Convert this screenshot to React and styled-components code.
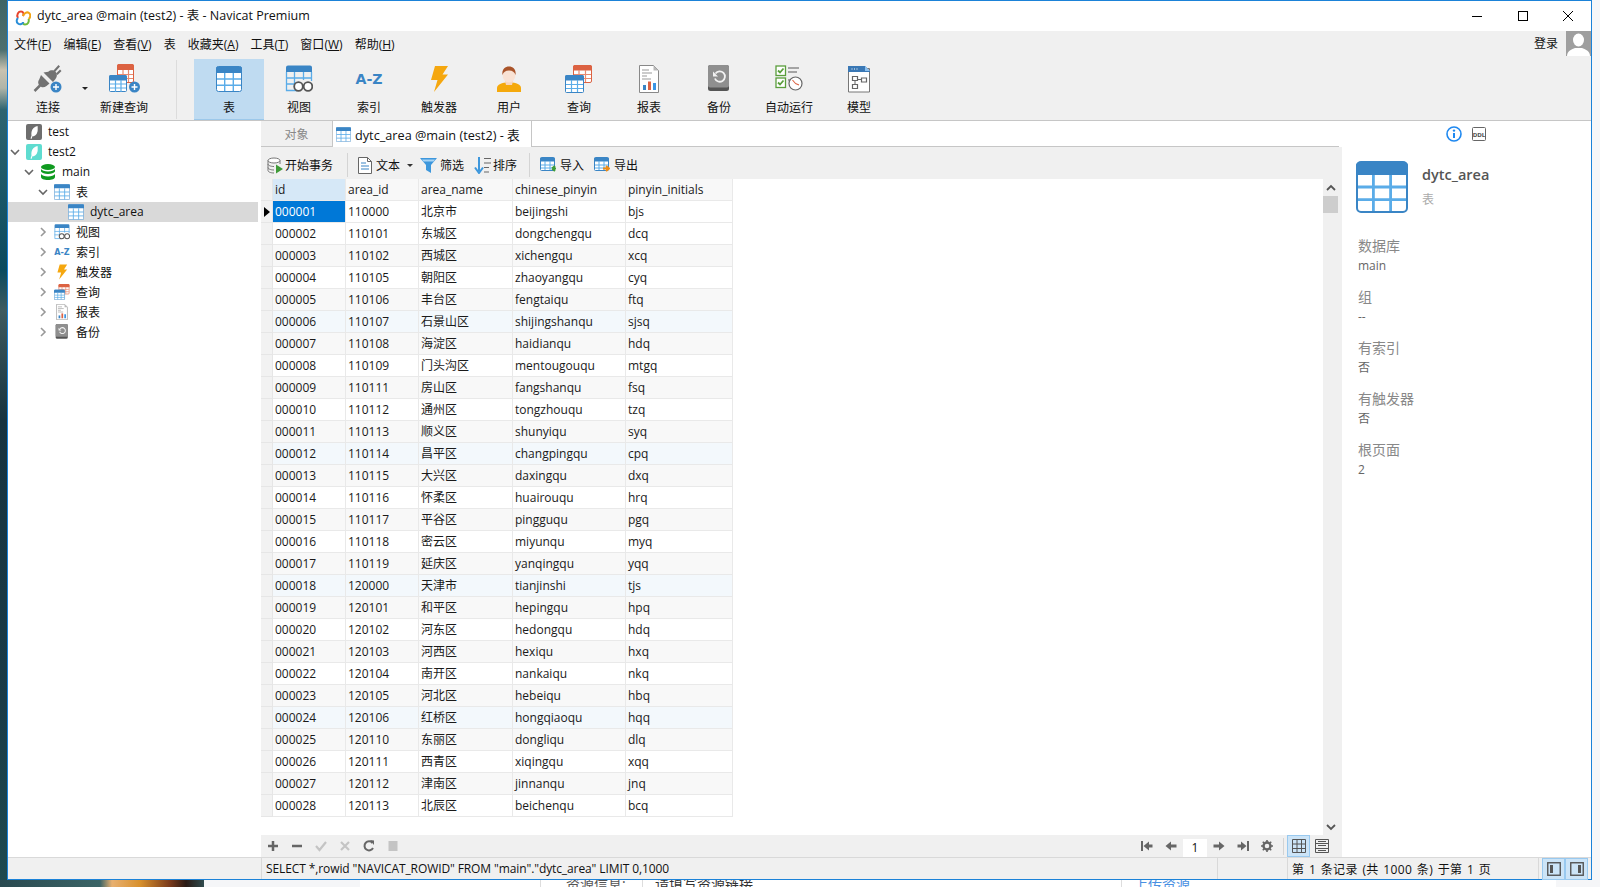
import React from "react";
import styled, { createGlobalStyle } from "styled-components";

const GlobalStyle = createGlobalStyle`
  html, body {
    margin: 0;
    padding: 0;
    height: 100%;
    overflow: hidden;
    background: #f5f6f8;
  }
  body {
    font-family: "Open Sans", "Noto Sans CJK SC", sans-serif;
    font-size: 12px;
    color: #111;
  }
`;

const rows = [
  ["000001", "110000", "北京市", "beijingshi", "bjs"],
  ["000002", "110101", "东城区", "dongchengqu", "dcq"],
  ["000003", "110102", "西城区", "xichengqu", "xcq"],
  ["000004", "110105", "朝阳区", "zhaoyangqu", "cyq"],
  ["000005", "110106", "丰台区", "fengtaiqu", "ftq"],
  ["000006", "110107", "石景山区", "shijingshanqu", "sjsq"],
  ["000007", "110108", "海淀区", "haidianqu", "hdq"],
  ["000008", "110109", "门头沟区", "mentougouqu", "mtgq"],
  ["000009", "110111", "房山区", "fangshanqu", "fsq"],
  ["000010", "110112", "通州区", "tongzhouqu", "tzq"],
  ["000011", "110113", "顺义区", "shunyiqu", "syq"],
  ["000012", "110114", "昌平区", "changpingqu", "cpq"],
  ["000013", "110115", "大兴区", "daxingqu", "dxq"],
  ["000014", "110116", "怀柔区", "huairouqu", "hrq"],
  ["000015", "110117", "平谷区", "pingguqu", "pgq"],
  ["000016", "110118", "密云区", "miyunqu", "myq"],
  ["000017", "110119", "延庆区", "yanqingqu", "yqq"],
  ["000018", "120000", "天津市", "tianjinshi", "tjs"],
  ["000019", "120101", "和平区", "hepingqu", "hpq"],
  ["000020", "120102", "河东区", "hedongqu", "hdq"],
  ["000021", "120103", "河西区", "hexiqu", "hxq"],
  ["000022", "120104", "南开区", "nankaiqu", "nkq"],
  ["000023", "120105", "河北区", "hebeiqu", "hbq"],
  ["000024", "120106", "红桥区", "hongqiaoqu", "hqq"],
  ["000025", "120110", "东丽区", "dongliqu", "dlq"],
  ["000026", "120111", "西青区", "xiqingqu", "xqq"],
  ["000027", "120112", "津南区", "jinnanqu", "jnq"],
  ["000028", "120113", "北辰区", "beichenqu", "bcq"],
];

const columns = ["id", "area_id", "area_name", "chinese_pinyin", "pinyin_initials"];

const menus = [
  ["文件", "F"],
  ["编辑", "E"],
  ["查看", "V"],
  ["表"],
  ["收藏夹", "A"],
  ["工具", "T"],
  ["窗口", "W"],
  ["帮助", "H"],
];

const details = [
  ["数据库", "main"],
  ["组", "--"],
  ["有索引", "否"],
  ["有触发器", "否"],
  ["根页面", "2"],
];

/* ---------- icons ---------- */

const TableIcon = ({ size = 26, dark = "#3a85c5", line = "#5aace8" }) => (
  <svg width={size} height={size} viewBox="0 0 26 26">
    <rect x="0.5" y="0.5" width="25" height="25" rx="2" fill="#fff" stroke={dark} />
    <path d="M0 2.5a2 2 0 0 1 2-2h22a2 2 0 0 1 2 2V7H0z" fill={dark} />
    <path d="M1 13h24M1 19.3h24M8.7 7v18M17.3 7v18" stroke={line} strokeWidth="1.4" />
  </svg>
);

const ViewIcon = ({ size = 28 }) => (
  <svg width={size} height={size} viewBox="0 0 28 28">
    <path d="M1 2.5a2 2 0 0 1 2-2h22a2 2 0 0 1 2 2V7H1z" fill="#3a85c5" />
    <path d="M1.5 7v18.5h11M26.5 7v9M1 13h26M1 19h10M9.5 7v12M18.5 7v8" stroke="#5aace8" strokeWidth="1.3" fill="none" />
    <circle cx="13.5" cy="21.5" r="4.3" fill="#fff" stroke="#555" strokeWidth="1.8" />
    <circle cx="23" cy="21.5" r="4.3" fill="#fff" stroke="#555" strokeWidth="1.8" />
    <path d="M17.8 21h1" stroke="#555" strokeWidth="1.8" />
  </svg>
);

const AzIcon = ({ size = 28 }) => (
  <svg width={size} height={size} viewBox="0 0 28 28">
    <text
      x="14"
      y="19"
      textAnchor="middle"
      textLength="27"
      lengthAdjust="spacingAndGlyphs"
      fontFamily="'DejaVu Sans', sans-serif"
      fontWeight="700"
      fontSize="14"
      fill="#3a85c5"
    >
      A-Z
    </text>
  </svg>
);

const BoltIcon = ({ size = 28 }) => (
  <svg width={size} height={size} viewBox="0 0 28 28">
    <path d="M10 1h13l-5.5 8.5H23L9 27l3.5-12H6z" fill="#f5a70f" />
  </svg>
);

const UserIcon = ({ size = 28 }) => (
  <svg width={size} height={size} viewBox="0 0 28 28">
    <path d="M2 27v-4c0-3.5 4.5-5.5 12-5.5s12 2 12 5.5v4z" fill="#f5a90c" />
    <path d="M10 16h8l-1 4h-6z" fill="#f7d5bd" />
    <ellipse cx="14" cy="9.5" rx="6.5" ry="8" fill="#f9e2d4" />
    <path d="M7.5 10C6.7 4.5 9.8 1.5 14 1.5S21.3 4.5 20.5 10c-1-3-2.8-4.5-6.5-4.5S8.5 7 7.5 10z" fill="#a9542a" />
  </svg>
);

const QueryIcon = ({ size = 28 }) => (
  <svg width={size} height={size} viewBox="0 0 28 28">
    <rect x="8.5" y="0.5" width="18" height="17" rx="1.5" fill="#fff" stroke="#dc6242" />
    <path d="M8 2a2 2 0 0 1 2-2h15a2 2 0 0 1 2 2v3.5H8z" fill="#dc6242" />
    <path d="M9 9.5h17M9 13.5h17M14 5v12M20.5 5v12" stroke="#e98a70" strokeWidth="1.2" />
    <rect x="0.5" y="10.5" width="18" height="17" rx="1" fill="#fff" stroke="#3a85c5" />
    <path d="M0 12a2 2 0 0 1 2-2h15a2 2 0 0 1 2 2v3.5H0z" fill="#3a85c5" />
    <path d="M1 19.5h17M1 23.5h17M6.5 15v12M12.5 15v12" stroke="#5aace8" strokeWidth="1.2" />
  </svg>
);

const NewQueryIcon = () => (
  <svg width="31" height="29" viewBox="0 0 31 29">
    <rect x="8.5" y="0.5" width="16" height="18" rx="1.5" fill="#fff" stroke="#dc6242" />
    <path d="M8 2a2 2 0 0 1 2-2h13a2 2 0 0 1 2 2v4H8z" fill="#dc6242" />
    <path d="M9 10.5h15M9 14.5h15M14 6v12M19.5 6v12" stroke="#e98a70" strokeWidth="1.2" />
    <rect x="0.5" y="11.5" width="17" height="16" rx="1" fill="#fff" stroke="#3a85c5" />
    <path d="M0 13a2 2 0 0 1 2-2h14a2 2 0 0 1 2 2v3.5H0z" fill="#3a85c5" />
    <path d="M1 20h16M1 24h16M6.5 16v12M12 16v12" stroke="#5aace8" strokeWidth="1.2" />
    <circle cx="25.5" cy="23" r="5.5" fill="#3a85c5" />
    <path d="M25.5 20v6M22.5 23h6" stroke="#fff" strokeWidth="1.4" />
  </svg>
);

const ConnectIcon = () => (
  <svg width="30" height="29" viewBox="0 0 30 29">
    <g fill="#727272">
      <path d="M8 11l8.5 8.5-3 2.5c-2.5 2-5.5 1.5-7-.2s-2-4.300-.2-6.500z" />
      <path d="M7 21.5l-5.5 5.5" stroke="#727272" strokeWidth="2.5" />
      <path d="M10.5 8.5l9.500 9.500 2.500-3c2-2.500 1.800-5.500 0-7.300s-5-2-7.200 0z" />
      <path d="M20.5 6.500l5-5.500 1.500 1.500-5 5.500zM23 9.500l4-4 1.500 1.500-4 4z" />
    </g>
    <circle cx="23" cy="23" r="5.5" fill="#3a85c5" />
    <path d="M23 20v6M20 23h6" stroke="#fff" strokeWidth="1.4" />
  </svg>
);

const ReportIcon = ({ size = 28 }) => (
  <svg width={size} height={size} viewBox="0 0 28 28">
    <path d="M4.5.5h14l5 5v22h-19z" fill="#fff" stroke="#888" />
    <path d="M18.5.5v5h5z" fill="#b9b9b9" />
    <path d="M7 5h7M7 8h10M7 11h5M7 14h9" stroke="#999" strokeWidth="1.1" />
    <path d="M8 20h3v5H8z" fill="#3a85c5" />
    <path d="M13 16.5h3V25h-3z" fill="#dc6242" />
    <path d="M18 18h3v7h-3z" fill="#3a95e5" />
  </svg>
);

const BackupIcon = ({ size = 28 }) => (
  <svg width={size} height={size} viewBox="0 0 28 28">
    <rect x="3" y="0" width="21" height="26" rx="2.5" fill="#555" />
    <rect x="3" y="0" width="21" height="22.5" rx="2" fill="#8f8f8f" />
    <path d="M10.5 8.5a5.2 5.2 0 1 1-.6 5" fill="none" stroke="#f2f2f2" strokeWidth="1.8" />
    <path d="M8 6.5v5h5z" fill="#f2f2f2" />
  </svg>
);

const AutoRunIcon = () => (
  <svg width="29" height="27" viewBox="0 0 29 27">
    <rect x="1" y="1" width="9.5" height="9.5" fill="#fff" stroke="#5a9e3c" strokeWidth="1.3" />
    <path d="M3 5.5l2 2 3.5-4" fill="none" stroke="#5a9e3c" strokeWidth="1.8" />
    <rect x="1" y="13" width="9.5" height="9.5" fill="#fff" stroke="#5a9e3c" strokeWidth="1.3" />
    <path d="M3 17.5l2 2 3.5-4" fill="none" stroke="#5a9e3c" strokeWidth="1.8" />
    <path d="M13 3h11M13 7h9M13 15h3" stroke="#8a8a8a" strokeWidth="1.6" />
    <circle cx="20.5" cy="18.5" r="6.5" fill="#fff" stroke="#666" strokeWidth="1.2" />
    <path d="M20.5 18.5l-3-3.5M20.5 18.5l3.5 1.5" stroke="#dc6242" strokeWidth="1.1" />
  </svg>
);

const ModelIcon = () => (
  <svg width="28" height="28" viewBox="0 0 28 28">
    <path d="M3.5 3.5h21V27h-21z" fill="#fff" stroke="#777" />
    <path d="M3 1h17l5 5v1H3z" fill="#3a78b5" />
    <path d="M20 1l5 5h-5z" fill="#8cc0ee" />
    <path d="M6.5 4h1M9 4h1M11.5 4h1" stroke="#fff" strokeWidth="1.2" />
    <path d="M7.5 11.5h5v4h-5zM16.5 13h5v4h-5zM7.5 19.5h5v4h-5z" fill="none" stroke="#666" strokeWidth="1.2" />
    <path d="M12.5 14.5h4M10 15.5v4" stroke="#666" />
  </svg>
);

const Feather = ({ color }) => (
  <svg width="16" height="16" viewBox="0 0 16 16">
    <rect width="16" height="16" rx="2" fill={color} />
    <path d="M11.5 2c-3 .5-5.500 3-6 6-.2 1.500-.2 2.500 0 3.500L4.500 14.500l1.200.2.700-2.500c3 .2 5-2.500 5.300-6 .1-1.800 0-3.500-.2-4.700z" fill="#fff" />
  </svg>
);

const DbIcon = () => (
  <svg width="14" height="16" viewBox="0 0 14 16">
    <ellipse cx="7" cy="3" rx="7" ry="3" fill="#0f9a1f" />
    <path d="M0 5c1 1.700 3.500 2.400 7 2.400S13 6.700 14 5v2.500c-1 1.700-3.500 2.400-7 2.400S1 9.200 0 7.500z" fill="#0f9a1f" />
    <path d="M0 10c1 1.700 3.500 2.400 7 2.400s6-.7 7-2.400v3c0 1.700-3 3-7 3s-7-1.300-7-3z" fill="#0f9a1f" />
  </svg>
);

const Chevron = ({ open, color = "#666" }) => (
  <svg width="10" height="10" viewBox="0 0 10 10">
    <path
      d={open ? "M1 3l4 4 4-4" : "M3 1l4 4-4 4"}
      fill="none"
      stroke={color}
      strokeWidth="1.6"
    />
  </svg>
);

const Logo = () => (
  <svg width="16" height="16" viewBox="0 0 16 16" fill="none" strokeWidth="2">
    <path d="M3 8C1 4.500 3.500 1.500 6 1.500S9 4 8 6" stroke="#e8452c" />
    <path d="M8 6c1-3 4-4.500 6-3s1.500 5-.5 6" stroke="#f2a516" />
    <path d="M13.5 9c1 2.500-.5 5.500-3.500 5.500-1.500 0-2-1-2-2.500" stroke="#6fbb3a" />
    <path d="M8 12c0 2-3 3-5 1.500S1.500 9.500 3 8" stroke="#2b8fd8" />
  </svg>
);

const StartTxIcon = () => (
  <svg width="17" height="17" viewBox="0 0 17 17">
    <ellipse cx="7" cy="3.5" rx="6" ry="2.5" fill="#fff" stroke="#777" />
    <path d="M1 3.5v10c0 1.400 2.700 2.500 6 2.500M13 3.500V7M1 7c0 1.400 2.700 2.500 6 2.500M1 10.500c0 1.400 2.700 2.500 6 2.500" fill="none" stroke="#777" />
    <path d="M9 7.5l7 4.500-7 4.500z" fill="#3f9b38" />
  </svg>
);

const DocIcon = () => (
  <svg width="14" height="17" viewBox="0 0 14 17">
    <path d="M.5.5h9l4 4v12H.5z" fill="#fff" stroke="#666" />
    <path d="M9.5.5v4h4" fill="none" stroke="#666" />
    <path d="M3 6h5M3 9h8M3 12h8" stroke="#3a85c5" />
  </svg>
);

const FunnelIcon = () => (
  <svg width="17" height="17" viewBox="0 0 17 17">
    <path d="M0 1h17l-6 7v8l-5-3V8z" fill="#3d97dc" />
    <path d="M2 2.5h13l-1.500 2h-10z" fill="#a7d4f5" />
  </svg>
);

const SortIcon = () => (
  <svg width="17" height="17" viewBox="0 0 17 17">
    <path d="M5 0v14M1 10.500L5 16l4-5.500" fill="none" stroke="#3d97dc" strokeWidth="2" />
    <path d="M10 1.5h7M10 6h7M10 10.500h5M10 15h5" stroke="#666" />
  </svg>
);

const TransferIcon = ({ arrow, color }) => (
  <svg width="16" height="16" viewBox="0 0 16 16">
    <rect x="0.5" y="0.5" width="14" height="13" rx="1" fill="#fff" stroke="#3a85c5" />
    <path d="M0 2a1.500 1.500 0 0 1 1.500-1.500h12A1.500 1.500 0 0 1 15 2v2.500H0z" fill="#3a85c5" />
    <path d="M1 8h13M1 11h13M5 4v9M10 4v9" stroke="#5aace8" />
    <path d={arrow} fill="none" stroke={color} strokeWidth="2" />
  </svg>
);

const GlyphSvg = ({ children, w = 14 }) => (
  <svg width={w} height="14" viewBox={`0 0 ${w} 14`}>
    {children}
  </svg>
);

const Info = () => (
  <svg width="16" height="16" viewBox="0 0 16 16">
    <circle cx="8" cy="8" r="7" fill="#fff" stroke="#1e88f0" strokeWidth="1.6" />
    <path d="M8 7v5" stroke="#1e88f0" strokeWidth="2" />
    <circle cx="8" cy="4.6" r="1.2" fill="#1e88f0" />
  </svg>
);

const AvatarIcon = () => (
  <svg width="25" height="25" viewBox="0 0 25 25">
    <rect width="25" height="25" fill="#9f9f9f" />
    <ellipse cx="12.5" cy="9" rx="5.5" ry="6.5" fill="#fff" />
    <path d="M1 25c0-5 5-7 8-8h7c3 1 8 3 8 8z" fill="#fff" />
  </svg>
);

const PaneIcon = ({ right }) => (
  <svg width="14" height="14" viewBox="0 0 14 14">
    <rect x="0.75" y="0.75" width="12.5" height="12.5" fill="none" stroke="#555" strokeWidth="1.4" />
    <path d={right ? "M8 3h3v8H8z" : "M3 3h3v8H3z"} fill="#555" />
  </svg>
);

/* ---------- layout ---------- */

const Page = styled.div`
  width: 1600px;
  height: 887px;
  display: flex;
  flex-direction: column;
  overflow: hidden;
`;

const TopRow = styled.div`
  display: flex;
  height: 880px;
  flex: none;
`;

const DesktopEdge = styled.div`
  width: 7px;
  flex: none;
  background: linear-gradient(
    180deg,
    #3f6464 0,
    #4d6f6e 50px,
    #c9c2b0 70px,
    #b0b5a8 88px,
    #2e6470 110px,
    #0a4a5e 270px,
    #3e5a5e 310px,
    #17333f 420px,
    #1a3b47 700px,
    #1e4a4f 880px
  );
`;

const PaleEdge = styled.div`
  width: 8px;
  flex: none;
  background: #f5f6f8;
`;

const Window = styled.div`
  width: 1585px;
  flex: none;
  box-sizing: border-box;
  border: 1px solid #1b82d8;
  background: #fff;
  display: flex;
  flex-direction: column;
`;

const TitleBar = styled.div`
  height: 30px;
  flex: none;
  display: flex;
  align-items: flex-start;
  padding-left: 7px;
  font-size: 12.5px;
  line-height: 30px;
  background: #fff;
`;

const LogoSlot = styled.div`
  margin: 6px 6px 0 0;
  height: 16px;
`;

const TitleText = styled.span`
  flex: 1;
`;

const WinButton = styled.div`
  width: 45.5px;
  height: 30px;
  display: flex;
  align-items: center;
  justify-content: center;
`;

const MenuBar = styled.div`
  height: 26px;
  flex: none;
  background: #f0f0f0;
  display: flex;
  align-items: center;
  padding-left: 6px;
  gap: 12.1px;
`;

const MenuItem = styled.span`
  white-space: nowrap;
`;

const Login = styled.div`
  margin-left: auto;
  display: flex;
  align-items: flex-start;
  height: 26px;
  gap: 8px;
  line-height: 26px;
`;

const Toolbar = styled.div`
  height: 64px;
  flex: none;
  box-sizing: border-box;
  background: #f0f0f0;
  border-bottom: 1px solid #c6c6c6;
  display: flex;
  align-items: flex-end;
  padding-left: 5px;
`;

const ToolButton = styled.div`
  width: 70px;
  height: 61px;
  flex: none;
  box-sizing: border-box;
  display: flex;
  flex-direction: column;
  align-items: center;
  background: ${(p) => (p.$active ? "#bfdbf1" : "transparent")};
  border-bottom: 1px solid ${(p) => (p.$active ? "#9cc8ea" : "transparent")};
`;

const ToolIcon = styled.div`
  height: 29px;
  margin-top: 5px;
  display: flex;
  align-items: center;
  justify-content: center;
`;

const ToolLabel = styled.span`
  margin-top: 7px;
  line-height: 16px;
`;

const DropArrow = styled.div`
  width: 6px;
  height: 0;
  flex: none;
  align-self: center;
  margin-left: -1px;
  margin-right: 1px;
  box-sizing: border-box;
  border-left: 3px solid transparent;
  border-right: 3px solid transparent;
  border-top: 3px solid #222;
`;

const ToolDivider = styled.div`
  width: 1px;
  height: 59px;
  flex: none;
  margin: 3px 17px 0;
  align-self: flex-start;
  background: #dcdcdc;
`;

const Body = styled.div`
  flex: 1;
  min-height: 0;
  display: flex;
`;

const Sidebar = styled.div`
  width: 253px;
  flex: none;
  padding-top: 0.5px;
  background: #fff;
`;

const TreeRow = styled.div`
  height: 20px;
  margin-right: 3px;
  display: flex;
  align-items: center;
  padding-left: ${(p) => p.$indent}px;
  background: ${(p) => (p.$selected ? "#d9d9d9" : "transparent")};
`;

const TreeToggle = styled.span`
  width: 14px;
  flex: none;
  display: flex;
  align-items: center;
  justify-content: center;
`;

const TreeIcon = styled.span`
  width: 16px;
  height: 16px;
  flex: none;
  margin-left: ${(p) => p.$left || 0}px;
  margin-right: 6px;
  display: flex;
  align-items: center;
  justify-content: center;
`;

const Center = styled.div`
  width: 1081px;
  flex: none;
  display: flex;
  flex-direction: column;
`;

const TabStrip = styled.div`
  height: 26px;
  flex: none;
  box-sizing: border-box;
  display: flex;
  margin-right: 3px;
  border-bottom: 1px solid #c6c6c6;
`;

const Tab = styled.div`
  height: ${(p) => (p.$active ? "26px" : "25px")};
  box-sizing: border-box;
  width: ${(p) => (p.$active ? "200px" : "71px")};
  display: flex;
  align-items: center;
  justify-content: ${(p) => (p.$active ? "flex-start" : "center")};
  gap: 4px;
  padding-left: ${(p) => (p.$active ? "3px" : "0")};
  font-size: ${(p) => (p.$active ? "12.7px" : "12px")};
  background: ${(p) => (p.$active ? "#fff" : "#f0f0f0")};
  color: ${(p) => (p.$active ? "#111" : "#888")};
  border-left: ${(p) => (p.$active ? "1px solid #c6c6c6" : "none")};
  border-right: ${(p) => (p.$active ? "1px solid #c6c6c6" : "none")};
`;

const GridToolbar = styled.div`
  height: 32px;
  flex: none;
  box-sizing: border-box;
  background: #f0f0f0;
  display: flex;
  align-items: center;
  padding: 4px 0 0 6px;
`;

const GridTool = styled.div`
  display: flex;
  align-items: center;
  gap: ${(p) => p.$gap}px;
  margin-left: ${(p) => p.$left || 0}px;
`;

const GridDivider = styled.div`
  width: 1px;
  height: 24px;
  background: #d4d4d4;
  margin-left: ${(p) => p.$left}px;
`;

const SmallArrow = styled.span`
  width: 0;
  height: 0;
  margin-left: 3px;
  border-left: 3px solid transparent;
  border-right: 3px solid transparent;
  border-top: 3px solid #333;
`;

const GridArea = styled.div`
  flex: 1;
  min-height: 0;
  display: flex;
  background: #f0f0f0;
`;

const GridBody = styled.div`
  flex: 1;
  background: #fff;
`;

const GridRow = styled.div`
  display: grid;
  grid-template-columns: 12px 73px 73px 94px 113px 107px;
  width: 472px;
  height: 22px;
  background: ${(p) => p.$bg || "#fff"};
`;

const IndicatorCell = styled.div`
  background: #f2f2f2;
  box-sizing: border-box;
  border-bottom: 1px solid #e6e6e6;
  border-right: 1px solid #e6e6e6;
  display: flex;
  align-items: center;
  justify-content: center;
`;

const Marker = styled.span`
  width: 0;
  height: 0;
  border-top: 5px solid transparent;
  border-bottom: 5px solid transparent;
  border-left: 6px solid #000;
`;

const Cell = styled.div`
  box-sizing: border-box;
  padding-left: 2px;
  line-height: 21px;
  white-space: nowrap;
  overflow: hidden;
  border-bottom: 1px solid #e9e9e9;
  border-right: 1px solid #e9e9e9;
  color: ${(p) => (p.$selected ? "#fff" : "#1a1a1a")};
  background: ${(p) => (p.$selected ? "#0078d7" : "transparent")};
`;

const HeaderCell = styled(Cell)`
  background: ${(p) => (p.$current ? "#d6e8f7" : "#f8f8f8")};
`;

const Scrollbar = styled.div`
  width: 19px;
  flex: none;
  display: flex;
  flex-direction: column;
  align-items: flex-start;
`;

const ScrollButton = styled.div`
  width: 15px;
  height: 17px;
  display: flex;
  align-items: center;
  justify-content: center;
`;

const ScrollThumb = styled.div`
  width: 15px;
  height: 17px;
  background: #cdcdcd;
`;

const ScrollSpace = styled.div`
  flex: 1;
`;

const GridFooter = styled.div`
  height: 22px;
  flex: none;
  background: #f0f0f0;
  display: flex;
  align-items: center;
  padding-right: 9px;
`;

const FootButton = styled.div`
  width: 24px;
  height: 22px;
  flex: none;
  display: flex;
  align-items: center;
  justify-content: center;
`;

const FootSpacer = styled.div`
  flex: 1;
`;

const PageInput = styled.div`
  width: 24px;
  height: 18px;
  background: #fff;
  align-self: flex-end;
  text-align: center;
  line-height: 18px;
`;

const FootDivider = styled.div`
  width: 1px;
  height: 17px;
  background: #d4d4d4;
  margin: 0 3px 0 4px;
`;

const ViewToggle = styled.div`
  width: 23px;
  height: 22px;
  flex: none;
  box-sizing: border-box;
  display: flex;
  align-items: center;
  justify-content: center;
  background: ${(p) => (p.$active ? "#cce4f7" : "transparent")};
  border: 1px solid ${(p) => (p.$active ? "#99c9ef" : "transparent")};
`;

const InfoPane = styled.div`
  flex: 1;
  background: #fff;
  padding-left: 14px;
`;

const InfoTabs = styled.div`
  height: 25px;
  display: flex;
  align-items: center;
  gap: 10px;
  padding-left: 90px;
`;

const ObjectHead = styled.div`
  display: flex;
  margin-top: 15px;
  gap: 14px;
`;

const ObjectName = styled.div`
  font-size: 14.5px;
  font-weight: 600;
  color: #555;
  line-height: 18px;
  margin-top: 5px;
`;

const ObjectKind = styled.div`
  color: #aaa;
  line-height: 18px;
  margin-top: 7px;
`;

const ObjectInfo = styled.div`
  display: flex;
  flex-direction: column;
  padding-left: 2px;
  margin-top: 23px;
  gap: 12px;
`;

const InfoLabel = styled.div`
  color: #888;
  font-size: 14px;
  line-height: 20px;
`;

const InfoValue = styled.div`
  color: #666;
  line-height: 19px;
`;

const StatusBar = styled.div`
  height: 22px;
  flex: none;
  box-sizing: border-box;
  background: #f0f0f0;
  border-top: 1px solid #d9d9d9;
  display: flex;
  align-items: stretch;
`;

const StatusCell = styled.div`
  width: ${(p) => (p.$w ? `${p.$w}px` : "auto")};
  flex: ${(p) => (p.$w ? "none" : 1)};
  box-sizing: border-box;
  border-left: ${(p) => (p.$first ? "none" : "1px solid #d9d9d9")};
  padding-left: 4px;
  display: flex;
  align-items: center;
  white-space: nowrap;
`;

const SqlText = styled.span`
  letter-spacing: -0.1px;
`;

const RecordText = styled.span`
  letter-spacing: 0.4px;
  word-spacing: 1px;
`;

const PaneButtons = styled.div`
  display: flex;
  margin-left: -1px;
`;

const BottomStrip = styled.div`
  flex: 1;
  min-height: 0;
  display: flex;
  overflow: hidden;
`;

const Photo = styled.div`
  width: 204px;
  flex: none;
  background: linear-gradient(
    90deg,
    #2a4a50 0,
    #3b6466 100px,
    #e8b070 112px,
    #d8902c 140px,
    #7a3a1c 170px,
    #2a1a14 186px,
    #2f4b4e 204px
  );
`;

const PaleBlock = styled.div`
  width: ${(p) => (p.$w ? `${p.$w}px` : "auto")};
  flex: ${(p) => (p.$w ? "none" : 1)};
  background: #f5f6f8;
`;

const PageBehind = styled.div`
  width: 1196px;
  flex: none;
  display: flex;
  background: #fff;
  font-size: 14px;
  line-height: 14px;
  color: #555;
`;

const BehindGap = styled.div`
  width: 180px;
  flex: none;
`;

const BehindLabel = styled.div`
  width: 102px;
  flex: none;
  box-sizing: border-box;
  padding-left: 25px;
  margin-top: -3px;
  border-left: 1px solid #ddd;
`;

const BehindInput = styled.div`
  width: 480px;
  flex: none;
  box-sizing: border-box;
  padding-left: 12px;
  margin-top: -3px;
  color: #333;
  border-left: 1px solid #ddd;
  border-right: 1px solid #ddd;
`;

const BehindLink = styled.div`
  padding-left: 12px;
  margin-top: -3px;
  color: #4a90e2;
`;

const tools = [
  ["表", <TableIcon />, true],
  ["视图", <ViewIcon />],
  ["索引", <AzIcon />],
  ["触发器", <BoltIcon />],
  ["用户", <UserIcon />],
  ["查询", <QueryIcon />],
  ["报表", <ReportIcon />],
  ["备份", <BackupIcon />],
  ["自动运行", <AutoRunIcon />],
  ["模型", <ModelIcon />],
];

const closedNodes = [
  ["视图", <ViewIcon size={16} />],
  ["索引", <AzIcon size={16} />],
  ["触发器", <BoltIcon size={16} />],
  ["查询", <QueryIcon size={16} />],
  ["报表", <ReportIcon size={16} />],
  ["备份", <BackupIcon size={16} />],
];

const rowColor = (i) => {
  if ((i + 1) % 6 === 0) return "#f3f8fc";
  return i % 2 === 0 && i > 0 ? "#f8f8f8" : "#fff";
};

const App = () => {
  return (
    <Page>
      <GlobalStyle />
      <TopRow>
        <DesktopEdge />
        <Window>
          <TitleBar>
            <LogoSlot>
              <Logo />
            </LogoSlot>
            <TitleText>dytc_area @main (test2) - 表 - Navicat Premium</TitleText>
            <WinButton>
              <GlyphSvg>
                <path d="M2 7.5h10" stroke="#000" />
              </GlyphSvg>
            </WinButton>
            <WinButton>
              <GlyphSvg>
                <rect x="2.5" y="2.5" width="9" height="9" fill="none" stroke="#000" />
              </GlyphSvg>
            </WinButton>
            <WinButton>
              <GlyphSvg>
                <path d="M2 2l10 10M12 2L2 12" stroke="#000" />
              </GlyphSvg>
            </WinButton>
          </TitleBar>

          <MenuBar>
            {menus.map(([label, key]) => (
              <MenuItem key={label}>
                {label}
                {key && (
                  <>
                    (<u>{key}</u>)
                  </>
                )}
              </MenuItem>
            ))}
            <Login>
              登录
              <AvatarIcon />
            </Login>
          </MenuBar>

          <Toolbar>
            <ToolButton>
              <ToolIcon>
                <ConnectIcon />
              </ToolIcon>
              <ToolLabel>连接</ToolLabel>
            </ToolButton>
            <DropArrow />
            <ToolButton>
              <ToolIcon>
                <NewQueryIcon />
              </ToolIcon>
              <ToolLabel>新建查询</ToolLabel>
            </ToolButton>
            <ToolDivider />
            {tools.map(([label, icon, active]) => (
              <ToolButton key={label} $active={active}>
                <ToolIcon>{icon}</ToolIcon>
                <ToolLabel>{label}</ToolLabel>
              </ToolButton>
            ))}
          </Toolbar>

          <Body>
            <Sidebar>
              <TreeRow $indent={4}>
                <TreeToggle />
                <TreeIcon>
                  <Feather color="#6e6e6e" />
                </TreeIcon>
                test
              </TreeRow>
              <TreeRow $indent={0}>
                <TreeToggle>
                  <Chevron open />
                </TreeToggle>
                <TreeIcon $left={4}>
                  <Feather color="#5fdcd0" />
                </TreeIcon>
                test2
              </TreeRow>
              <TreeRow $indent={14}>
                <TreeToggle>
                  <Chevron open />
                </TreeToggle>
                <TreeIcon $left={4}>
                  <DbIcon />
                </TreeIcon>
                main
              </TreeRow>
              <TreeRow $indent={28}>
                <TreeToggle>
                  <Chevron open />
                </TreeToggle>
                <TreeIcon $left={4}>
                  <TableIcon size={16} />
                </TreeIcon>
                表
              </TreeRow>
              <TreeRow $indent={46} $selected>
                <TreeToggle />
                <TreeIcon>
                  <TableIcon size={16} />
                </TreeIcon>
                dytc_area
              </TreeRow>
              {closedNodes.map(([label, icon]) => (
                <TreeRow key={label} $indent={28}>
                  <TreeToggle>
                    <Chevron color="#999" />
                  </TreeToggle>
                  <TreeIcon $left={4}>{icon}</TreeIcon>
                  {label}
                </TreeRow>
              ))}
            </Sidebar>

            <Center>
              <TabStrip>
                <Tab>对象</Tab>
                <Tab $active>
                  <TableIcon size={15} />
                  dytc_area @main (test2) - 表
                </Tab>
              </TabStrip>

              <GridToolbar>
                <GridTool $gap={1}>
                  <StartTxIcon />
                  开始事务
                </GridTool>
                <GridDivider $left={14} />
                <GridTool $left={10} $gap={4}>
                  <DocIcon />
                  文本
                  <SmallArrow />
                </GridTool>
                <GridTool $left={7} $gap={3}>
                  <FunnelIcon />
                  筛选
                </GridTool>
                <GridTool $left={10} $gap={2}>
                  <SortIcon />
                  排序
                </GridTool>
                <GridDivider $left={12} />
                <GridTool $left={10} $gap={4}>
                  <TransferIcon arrow="M15 14l-3-2.5m0 0l3-2.5M12 11.5h4" color="#3f9b38" />
                  导入
                </GridTool>
                <GridTool $left={10} $gap={4}>
                  <TransferIcon arrow="M12 9l3 2.5-3 2.5M9 11.5h6" color="#ef8c14" />
                  导出
                </GridTool>
              </GridToolbar>

              <GridArea>
                <GridBody>
                  <GridRow>
                    <IndicatorCell />
                    {columns.map((c, i) => (
                      <HeaderCell key={c} $current={i === 0}>
                        {c}
                      </HeaderCell>
                    ))}
                  </GridRow>
                  {rows.map((row, i) => (
                    <GridRow key={row[0]} $bg={rowColor(i)}>
                      <IndicatorCell>{i === 0 && <Marker />}</IndicatorCell>
                      {row.map((value, j) => (
                        <Cell key={j} $selected={i === 0 && j === 0}>
                          {value}
                        </Cell>
                      ))}
                    </GridRow>
                  ))}
                </GridBody>
                <Scrollbar>
                  <ScrollButton>
                    <GlyphSvg w={10}>
                      <path d="M1 9l4-4 4 4" fill="none" stroke="#555" strokeWidth="1.8" />
                    </GlyphSvg>
                  </ScrollButton>
                  <ScrollThumb />
                  <ScrollSpace />
                  <ScrollButton>
                    <GlyphSvg w={10}>
                      <path d="M1 5l4 4 4-4" fill="none" stroke="#555" strokeWidth="1.8" />
                    </GlyphSvg>
                  </ScrollButton>
                </Scrollbar>
              </GridArea>

              <GridFooter>
                <FootButton>
                  <GlyphSvg>
                    <path d="M7 2v10M2 7h10" stroke="#666" strokeWidth="2.5" />
                  </GlyphSvg>
                </FootButton>
                <FootButton>
                  <GlyphSvg>
                    <path d="M2 7h10" stroke="#666" strokeWidth="2.5" />
                  </GlyphSvg>
                </FootButton>
                <FootButton>
                  <GlyphSvg>
                    <path d="M2 7l3.5 4L12 3" fill="none" stroke="#c4c4c4" strokeWidth="2.2" />
                  </GlyphSvg>
                </FootButton>
                <FootButton>
                  <GlyphSvg>
                    <path d="M3 3l8 8M11 3l-8 8" stroke="#c4c4c4" strokeWidth="2.2" />
                  </GlyphSvg>
                </FootButton>
                <FootButton>
                  <GlyphSvg>
                    <path d="M10.5 4A4.5 4.5 0 1 0 11 9" fill="none" stroke="#666" strokeWidth="2" />
                    <path d="M8 1l4 .5V6z" fill="#666" />
                  </GlyphSvg>
                </FootButton>
                <FootButton>
                  <GlyphSvg>
                    <rect x="2.5" y="2" width="9" height="10" fill="#c4c4c4" />
                  </GlyphSvg>
                </FootButton>
                <FootSpacer />
                <FootButton>
                  <GlyphSvg>
                    <path d="M2 2v10" stroke="#666" strokeWidth="2" />
                    <path d="M3.5 7L9 2.5v3h3.5v3H9v3z" fill="#666" />
                  </GlyphSvg>
                </FootButton>
                <FootButton>
                  <GlyphSvg>
                    <path d="M1.5 7L7 2.5v3h5.5v3H7v3z" fill="#666" />
                  </GlyphSvg>
                </FootButton>
                <PageInput>1</PageInput>
                <FootButton>
                  <GlyphSvg>
                    <path d="M12.5 7L7 2.5v3H1.5v3H7v3z" fill="#666" />
                  </GlyphSvg>
                </FootButton>
                <FootButton>
                  <GlyphSvg>
                    <path d="M12 2v10" stroke="#666" strokeWidth="2" />
                    <path d="M10.5 7L5 2.5v3H1.5v3H5v3z" fill="#666" />
                  </GlyphSvg>
                </FootButton>
                <FootButton>
                  <GlyphSvg>
                    <circle cx="7" cy="7" r="3.5" fill="none" stroke="#666" strokeWidth="2.4" />
                    <path d="M7 1v2M7 11v2M1 7h2M11 7h2M2.8 2.8l1.4 1.4M9.8 9.8l1.4 1.4M11.2 2.8L9.8 4.2M4.2 9.8l-1.4 1.4" stroke="#666" strokeWidth="1.6" />
                  </GlyphSvg>
                </FootButton>
                <FootDivider />
                <ViewToggle $active>
                  <GlyphSvg>
                    <path d="M.5.5h13v13H.5zM.5 5h13M.5 9.5h13M5 .5v13M9.5.5v13" fill="none" stroke="#555" />
                  </GlyphSvg>
                </ViewToggle>
                <ViewToggle>
                  <GlyphSvg>
                    <path d="M.5.5h13v13H.5zM.5 4.5h13M.5 9.5h13" fill="none" stroke="#555" />
                    <path d="M3 6.5h8M3 2.5h8M3 11.5h8" stroke="#555" />
                  </GlyphSvg>
                </ViewToggle>
              </GridFooter>
            </Center>

            <InfoPane>
              <InfoTabs>
                <Info />
                <GlyphSvg>
                  <rect x="0.5" y="0.5" width="13" height="13" rx="1" fill="#fff" stroke="#666" />
                  <text x="7" y="9.5" textAnchor="middle" fontSize="5.5" fontWeight="700" fill="#555" fontFamily="'DejaVu Sans', sans-serif">
                    DDL
                  </text>
                </GlyphSvg>
              </InfoTabs>
              <ObjectHead>
                <TableIcon size={52} />
                <div>
                  <ObjectName>dytc_area</ObjectName>
                  <ObjectKind>表</ObjectKind>
                </div>
              </ObjectHead>
              <ObjectInfo>
                {details.map(([label, value]) => (
                  <div key={label}>
                    <InfoLabel>{label}</InfoLabel>
                    <InfoValue>{value}</InfoValue>
                  </div>
                ))}
              </ObjectInfo>
            </InfoPane>
          </Body>

          <StatusBar>
            <StatusCell $w={253} $first />
            <StatusCell>
              <SqlText>SELECT *,rowid "NAVICAT_ROWID" FROM "main"."dytc_area" LIMIT 0,1000</SqlText>
            </StatusCell>
            <StatusCell $w={70} />
            <StatusCell $w={251}>
              <RecordText>第 1 条记录 (共 1000 条) 于第 1 页</RecordText>
            </StatusCell>
            <StatusCell $w={53}>
              <PaneButtons>
                <ViewToggle $active>
                  <PaneIcon />
                </ViewToggle>
                <ViewToggle $active>
                  <PaneIcon right />
                </ViewToggle>
              </PaneButtons>
            </StatusCell>
          </StatusBar>
        </Window>
        <PaleEdge />
      </TopRow>
      <BottomStrip>
        <Photo />
        <PaleBlock $w={156} />
        <PageBehind>
          <BehindGap />
          <BehindLabel>资源信息:</BehindLabel>
          <BehindInput>请填写资源链接</BehindInput>
          <BehindLink>上传资源</BehindLink>
        </PageBehind>
        <PaleBlock />
      </BottomStrip>
    </Page>
  );
};

export default App;
